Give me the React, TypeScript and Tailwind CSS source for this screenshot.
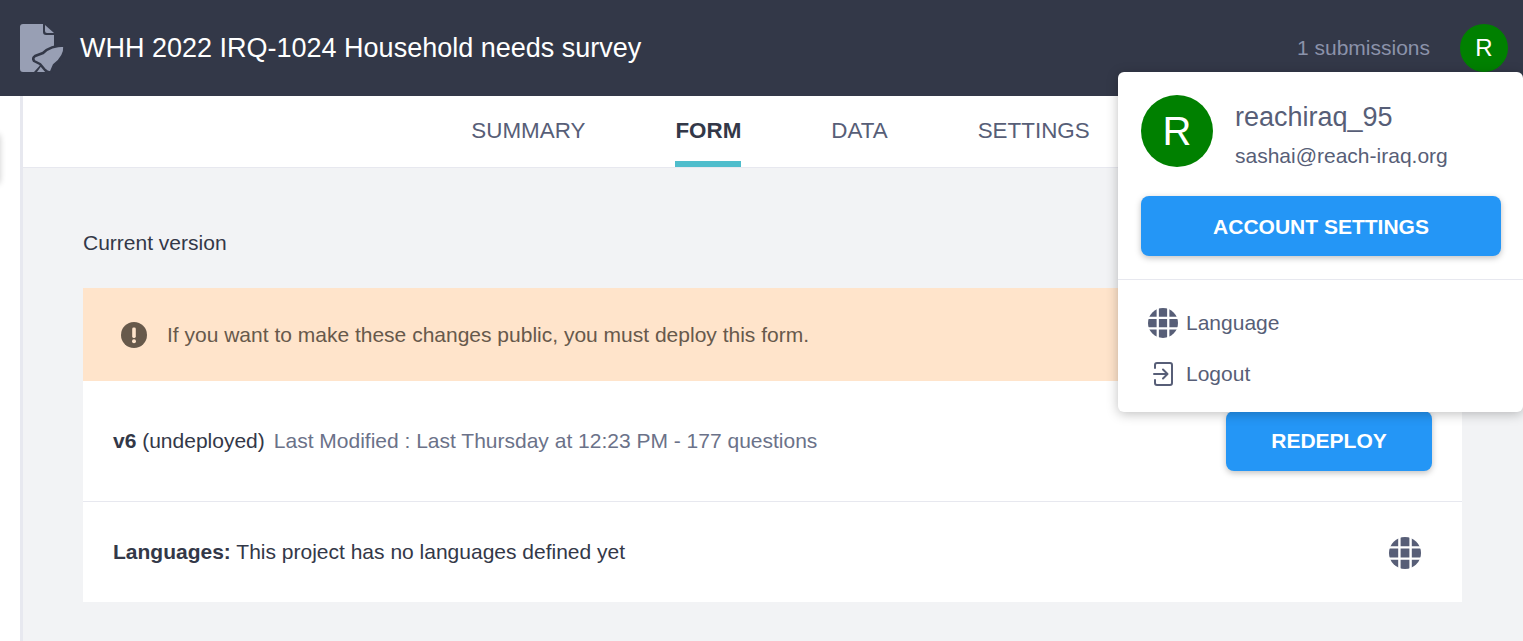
function GlobeGrid({ className }: { className?: string }) {
  // circle cut into a 3x3 grid by white lines
  return (
    <svg viewBox="0 0 32 32" className={className}>
      <circle cx="16" cy="16" r="16" fill="#575e77" />
      <path d="M10.4 0v32M21.6 0v32M0 10.4h32M0 21.6h32" stroke="#fff" strokeWidth="2.4" />
    </svg>
  );
}

function LogoutIcon() {
  return (
    <svg viewBox="0 0 20 24" fill="none" stroke="#575e77" strokeWidth="2" strokeLinecap="round" strokeLinejoin="round" className="w-[20px] h-[24px]">
      <path d="M2 6V3a2 2 0 0 1 2-2h13a2 2 0 0 1 2 2v18a2 2 0 0 1-2 2H4a2 2 0 0 1-2-2v-3" />
      <path d="M1 12h13M10 7.5l4.500 4.500-4.500 4.500" />
    </svg>
  );
}

function AssetIcon() {
  return (
    <svg viewBox="0 0 44 48" className="w-[44px] h-[48px] overflow-visible">
      <path d="M3 0h20v8a3 3 0 0 0 3 3h8v15L14 48H3a3 3 0 0 1-3-3V3a3 3 0 0 1 3-3z" fill="#989fb4" />
      <path d="M25 1l9 8h-7a2 2 0 0 1-2-2z" fill="#989fb4" />
      <path d="M17 48l5-7 4 4-1 3z" fill="#989fb4" />
      <path
        d="M44.500 21.500C37 21.500 29 23 23 29L15 32Q12 34 14 37L20 40L25 46Q28 49 31 48L34 41C41 36 45 29 44.500 21.500z"
        fill="#989fb4"
        stroke="#333848"
        strokeWidth="2.5"
        strokeLinejoin="round"
      />
    </svg>
  );
}

function Avatar({ className }: { className: string }) {
  return (
    <div className={`rounded-full bg-[#008000] text-white flex items-center justify-center shrink-0 ${className}`}>R</div>
  );
}

const tabs = ['SUMMARY', 'FORM', 'DATA', 'SETTINGS'];

export default function App() {
  return (
    <div className="relative h-[641px] w-[1523px] overflow-hidden bg-white font-['Liberation_Sans',Arial,sans-serif]">
      {/* Header */}
      <header className="h-[96px] bg-[#333848] flex items-center pl-[20px] pr-[15px]">
        <AssetIcon />
        <h1 className="ml-[16px] text-[27px] text-white flex-1">WHH 2022 IRQ-1024 Household needs survey</h1>
        <span className="text-[21px] text-[#8b92aa] mr-[30px]">1 submissions</span>
        <Avatar className="w-[48px] h-[48px] text-[24px]" />
      </header>

      <div className="flex h-[545px]">
        {/* Left strip */}
        <div className="w-[20px] bg-white relative">
          <div className="absolute left-[-10px] top-[38px] w-[10px] h-[50px] rounded bg-white shadow-[0_0_6px_rgba(0,0,0,0.2)]" />
        </div>
        <main className="flex-1 border-l-[3px] border-[#e7e8ef] bg-[#f2f3f5]">
          {/* Tabs */}
          <nav className="h-[72px] bg-white border-b border-[#e7e8ef] flex justify-center gap-[90px] pl-[15px]">
            {tabs.map((tab) => (
              <div
                key={tab}
                className={`h-[71px] flex items-center pt-[5px] text-[22.4px] border-b-[6px] ${
                  tab === 'FORM' ? 'font-bold text-[#333848] border-[#4fbdcc]' : 'text-[#575e77] border-transparent'
                }`}
              >
                {tab}
              </div>
            ))}
          </nav>

          <section className="pl-[60px] pr-[61px]">
            <h2 className="pt-[63px] pb-[34px] text-[21px] leading-[23px] text-[#333848]">Current version</h2>

            <div className="flex items-center h-[93px] pl-[38px] bg-[#ffe4cb] text-[21px] text-[#67594b]">
              <svg viewBox="0 0 26 26" className="w-[26px] h-[26px] mr-[20px]">
                <circle cx="13" cy="13" r="13" fill="#67594b" />
                <rect x="11.2" y="5.5" width="3.6" height="10.5" rx="1.4" fill="#ffe4cb" />
                <circle cx="13" cy="19.3" r="2" fill="#ffe4cb" />
              </svg>
              If you want to make these changes public, you must deploy this form.
            </div>

            <div className="bg-white">
              <div className="h-[121px] flex items-center pl-[30px] pr-[30px] border-b border-[#e7e8ef] text-[21px]">
                <span className="text-[#333848]">
                  <b>v6</b> (undeployed)
                </span>
                <span className="ml-[9px] text-[#6b7289] flex-1">Last Modified : Last Thursday at 12:23 PM - 177 questions</span>
                <button
                  type="button"
                  className="w-[206px] h-[60px] rounded-[8px] bg-[#2496f6] text-white font-bold text-[21px] shadow-[0_2px_6px_rgba(0,0,0,0.25)]"
                >
                  REDEPLOY
                </button>
              </div>
              <div className="h-[100px] flex items-center pl-[30px] pr-[41px] text-[21px] text-[#333848]">
                <span className="flex-1">
                  <b>Languages:</b> This project has no languages defined yet
                </span>
                <GlobeGrid className="w-[32px] h-[32px] mt-[2px]" />
              </div>
            </div>
          </section>
        </main>
      </div>

      {/* Account menu */}
      <div className="absolute left-[1118px] top-[72px] w-[405px] h-[340px] rounded-[6px] bg-white shadow-[0_2px_12px_rgba(0,0,0,0.25)]">
        <div className="flex pl-[23px] pt-[23px]">
          <Avatar className="w-[72px] h-[72px] text-[40px]" />
          <div className="ml-[22px] pt-[7px]">
            <div className="text-[27px] leading-[30px] text-[#575e77]">reachiraq_95</div>
            <div className="mt-[12px] text-[21px] leading-[23px] text-[#575e77]">sashai@reach-iraq.org</div>
          </div>
        </div>
        <div className="pl-[23px] pr-[22px] pt-[29px] pb-[23px] border-b border-[#e7e8ef]">
          <button
            type="button"
            className="w-full h-[60px] pt-[1px] rounded-[8px] bg-[#2496f6] text-white font-bold text-[21px] shadow-[0_2px_6px_rgba(0,0,0,0.25)]"
          >
            ACCOUNT SETTINGS
          </button>
        </div>
        <div className="pt-[18px] text-[21px] text-[#575e77]">
          <div className="flex items-center h-[50px] pl-[30px]">
            <GlobeGrid className="w-[30px] h-[30px]" />
            <span className="ml-[8px]">Language</span>
          </div>
          <div className="flex items-center h-[50px] pl-[35px] mt-[1px]">
            <LogoutIcon />
            <span className="ml-[13px]">Logout</span>
          </div>
        </div>
      </div>
    </div>
  );
}
